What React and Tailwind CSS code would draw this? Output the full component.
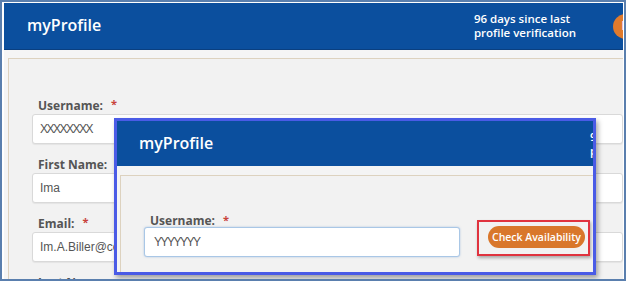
import React from "react";

const sans = { fontFamily: '"Open Sans", "Noto Sans", sans-serif' };

function Field({ label, required, value, tight }) {
  return (
    <div className="flex flex-col">
      <div className="flex items-start h-[16px] pl-[6px] text-[12px] font-bold text-[#555555] leading-[16px]" style={sans}>
        <span>{label}</span>
        {required && <span className="ml-[8px] text-[#c8423b] text-[11px] leading-[12px]">*</span>}
      </div>
      <div className="h-[30px] bg-white border border-[#d9d9d9] rounded-[3px] shadow-[0_1px_1px_rgba(0,0,0,0.06)] flex items-center pl-[7px] text-[12px] text-[#555555]" style={{ fontFamily: '"Liberation Sans", Arial, sans-serif' }}>
        <span className={tight ? "tracking-[-1.5px]" : ""}>{value}</span>
      </div>
    </div>
  );
}

export default function App() {
  return (
    <div className="w-[626px] h-[281px] overflow-hidden bg-white border-2 border-[#5a7fae] pt-[1px] pl-[2px] pr-[1px] relative" style={sans}>
      {/* Page header */}
      <div className="h-[47px] bg-[#0b4f9e] border-b border-[#0a3f80] flex items-center overflow-hidden">
        <div className="pl-[23px] text-white text-[16px] font-semibold leading-none pb-[2px]">myProfile</div>
        <div className="ml-auto text-white text-[11.5px] font-semibold leading-[14px]">
          <div>96 days since last</div>
          <div>profile verification</div>
        </div>
        <div className="ml-[37px] mr-[-15px] shrink-0 w-[25px] h-[25px] rounded-full bg-[#e07a2c] flex items-center justify-center text-white text-[12px] font-bold">R</div>
      </div>

      {/* Page body */}
      <div className="bg-[#f5f5f5] pt-[8px] pl-[4px] h-[240px]">
        <div className="bg-[#f2f2f2] border-t border-l border-[#ddd2bf] h-full pl-[23px] pt-[39px] flex flex-col gap-[13px]">
          <Field label="Username:" required value="XXXXXXXX" tight />
          <Field label="First Name:" value="Ima" />
          <Field label="Email:" required value="Im.A.Biller@company.com" />
          <Field label="Last Name:" value="" />
        </div>
      </div>

      {/* Modal overlay */}
      <div className="absolute left-[112px] top-[116px] w-[482px] h-[157px] border-[3px] border-[#4a5be6] bg-[#f4f4f4] shadow-[2px_3px_5px_rgba(0,0,0,0.35)] flex flex-col overflow-hidden">
        <div className="h-[45px] shrink-0 bg-[#0b4f9e] flex items-center overflow-hidden">
          <div className="w-[473px] shrink-0 pl-[22px] text-white text-[16px] font-semibold leading-none pb-[2px]">myProfile</div>
          <div className="shrink-0 text-white text-[11.5px] font-semibold leading-[14px] whitespace-nowrap">
            <div>96 days since last</div>
            <div>profile verification</div>
          </div>
        </div>
        <div className="flex-1 pt-[9px] pl-[3px]">
          <div className="h-full bg-[#f2f2f2] border-t border-l border-[#ddd2bf] pl-[23px] pt-[38px] flex items-start">
            <div className="flex flex-col w-[316px]">
              <div className="flex items-start h-[13px] pl-[6px] text-[12px] font-bold text-[#555555] leading-[14px]">
                <span>Username:</span>
                <span className="ml-[8px] text-[#c8423b] text-[11px] leading-[12px]">*</span>
              </div>
              <div className="h-[30px] bg-white border border-[#a9c7e6] rounded-[3px] shadow-[0_0_2px_rgba(100,150,210,0.5)] flex items-center pl-[9px] text-[12px] text-[#555555]" style={{ fontFamily: '"Liberation Sans", Arial, sans-serif' }}>
                <span className="tracking-[-1.5px]">YYYYYYY</span>
              </div>
            </div>
            <div className="ml-[17px] mt-[6px] w-[113px] h-[36px] border-2 border-[#e0333f] shadow-[1px_2px_3px_rgba(0,0,0,0.3)] flex items-start pt-[4px] pl-[9px]">
              <button className="h-[22px] w-[97px] rounded-full bg-[#d9772b] text-white text-[10.5px] font-semibold leading-none flex items-center justify-center whitespace-nowrap" style={sans}>
                Check Availability
              </button>
            </div>
          </div>
        </div>
      </div>
    </div>
  );
}
